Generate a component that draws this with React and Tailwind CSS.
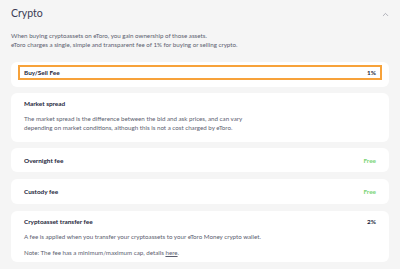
import { ChevronUp } from "lucide-react";

const small = "text-[6.2px] leading-[9px] text-[#5b5e6f]";
const bold = "text-[6.4px] leading-[9px] font-bold text-[#1c1e3a]";

function Card({ title, value, green, className = "", children }) {
  return (
    <div className={"bg-white rounded-[6px] px-[13px] " + className}>
      <div className="flex items-center justify-between h-[9px]">
        <span className={bold}>{title}</span>
        {value && (
          <span className={green ? "text-[6.4px] leading-[9px] font-bold text-[#78d475]" : bold}>{value}</span>
        )}
      </div>
      {children}
    </div>
  );
}

export default function App() {
  return (
    <div className="w-[400px] h-[269px] bg-[#f5f5f5] px-[11px] overflow-hidden" style={{ fontFamily: "Lato, 'Noto Sans', sans-serif" }}>
      <div className="flex items-center justify-between h-[28px]">
        <h2 className="text-[10.5px] text-[#3a3c54]">Crypto</h2>
        <ChevronUp className="w-[9px] h-[9px] text-[#9a9ba6] mr-[-1px]" strokeWidth={2} />
      </div>
      <div className={"mt-[3px] " + small}>
        <p>When buying cryptoassets on eToro, you gain ownership of those assets.</p>
        <p>eToro charges a single, simple and transparent fee of 1% for buying or selling crypto.</p>
      </div>
      <div className="flex flex-col gap-[6px] mt-[13px]">
        <div className="bg-white rounded-[6px] px-[7px] pt-[3px] pb-[7px]">
          <div className="border-2 border-[#f7a23a] px-[4px] h-[15px] flex items-center justify-between">
            <span className={bold}>Buy/Sell Fee</span>
            <span className={bold}>1%</span>
          </div>
        </div>
        <Card title="Market spread" className="pt-[6px] pb-[10px]">
          <p className={"mt-[6px] " + small}>
            The market spread is the difference between the bid and ask prices, and can vary
            <br />
            depending on market conditions, although this is not a cost charged by eToro.
          </p>
        </Card>
        <Card title="Overnight fee" value="Free" green className="pt-[8px] pb-[7px]" />
        <Card title="Custody fee" value="Free" green className="mt-[1px] pt-[8px] pb-[8px]" />
        <Card title="Cryptoasset transfer fee" value="2%" className="mt-[1px] pt-[6px] pb-[5px]">
          <p className={"mt-[6px] " + small}>
            A fee is applied when you transfer your cryptoassets to your eToro Money crypto wallet.
          </p>
          <p className={"mt-[7px] " + small}>
            Note: The fee has a minimum/maximum cap, details <span className="underline">here</span>.
          </p>
        </Card>
      </div>
    </div>
  );
}
